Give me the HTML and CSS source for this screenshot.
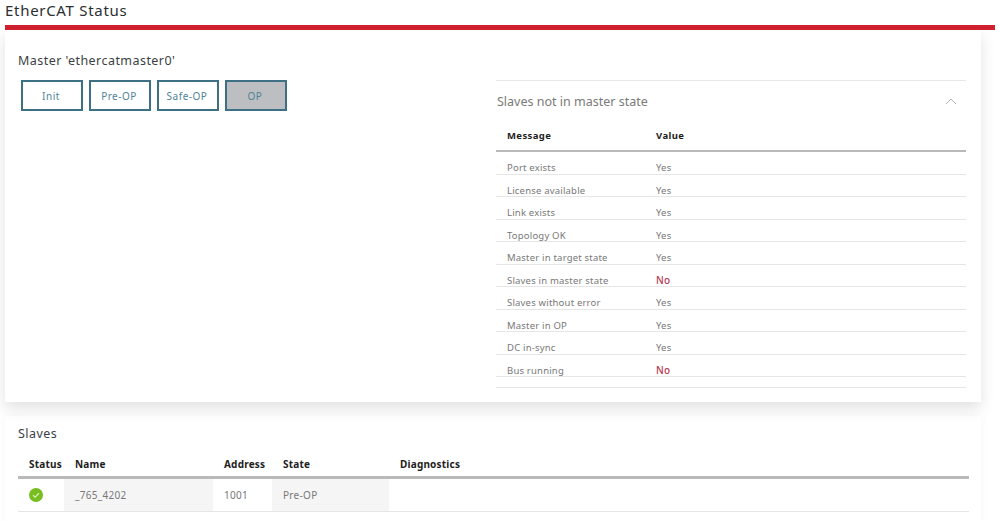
FILE: index.html
```html
<!DOCTYPE html>
<html lang="en">

<head>
    <meta charset="UTF-8">
    <meta name="viewport" content="width=device-width, initial-scale=1.0">
    <title>EtherCAT Status</title>
    <link rel="stylesheet" href="styles.css">
</head>

<body>
    <header class="pageTitle">
        <h1>EtherCAT Status</h1>
    </header>

    <section class="card masterCard">
        <div class="masterLeft">
            <h2>Master 'ethercatmaster0'</h2>
            <div class="stateButtons">
                <button>Init</button>
                <button>Pre-OP</button>
                <button>Safe-OP</button>
                <button class="active">OP</button>
            </div>
        </div>

        <div class="masterRight">
            <div class="accordionHead">
                <span>Slaves not in master state</span>
                <svg width="12" height="7" viewBox="0 0 12 7" aria-hidden="true">
                    <path d="M1 6 L6 1 L11 6" fill="none" stroke="#b5b5b5" stroke-width="1"/>
                </svg>
            </div>
            <div class="msgRow msgHead">
                <span>Message</span>
                <span>Value</span>
            </div>
            <div class="msgRow"><span>Port exists</span><span>Yes</span></div>
            <div class="msgRow"><span>License available</span><span>Yes</span></div>
            <div class="msgRow"><span>Link exists</span><span>Yes</span></div>
            <div class="msgRow"><span>Topology OK</span><span>Yes</span></div>
            <div class="msgRow"><span>Master in target state</span><span>Yes</span></div>
            <div class="msgRow"><span>Slaves in master state</span><span class="no">No</span></div>
            <div class="msgRow"><span>Slaves without error</span><span>Yes</span></div>
            <div class="msgRow"><span>Master in OP</span><span>Yes</span></div>
            <div class="msgRow"><span>DC in-sync</span><span>Yes</span></div>
            <div class="msgRow"><span>Bus running</span><span class="no">No</span></div>
            <div class="msgEnd"></div>
        </div>
    </section>

    <section class="slaves">
        <h2>Slaves</h2>
        <div class="slaveRow slaveHead">
            <span>Status</span>
            <span>Name</span>
            <span>Address</span>
            <span>State</span>
            <span>Diagnostics</span>
        </div>
        <div class="slaveRow">
            <span class="statusCell">
                <svg width="14" height="14" viewBox="0 0 14 14" aria-hidden="true">
                    <circle cx="7" cy="7" r="7" fill="#78be20"/>
                    <path d="M4 7.2 L6.2 9.2 L10 5.2" fill="none" stroke="#dff0c8" stroke-width="1.2"/>
                </svg>
            </span>
            <span class="shaded">_765_4202</span>
            <span>1001</span>
            <span class="shaded">Pre-OP</span>
            <span></span>
        </div>
    </section>
</body>

</html>
```

FILE: styles.css
```css
* {
    box-sizing: border-box;
    margin: 0;
    padding: 0;
}

body {
    background-color: #fff;
    font-family: "Noto Sans", "Liberation Sans", sans-serif;
    color: #525f6b;
    height: 521px;
    overflow: hidden;
}

.pageTitle {
    margin: 0 4px 0 5px;
    height: 30px;
    border-bottom: 5px solid #cf2030;
}

.pageTitle h1 {
    font-size: 15px;
    font-weight: 400;
    line-height: 20px;
    letter-spacing: 0.7px;
    color: #2b2f33;
}

.card {
    margin: 0 18px 0 5px;
    height: 372px;
    background-color: #fff;
    box-shadow: 0 6px 14px rgba(0, 0, 0, 0.12);
    clip-path: inset(0 -20px -30px -20px);
    display: flex;
}

.masterLeft {
    width: 491px;
    padding: 22px 0 0 13px;
}

h2 {
    font-size: 12.5px;
    font-weight: 400;
    line-height: 18px;
    letter-spacing: 0.45px;
    color: #3a3f44;
}

.stateButtons {
    display: flex;
    gap: 6px;
    margin: 10px 0 0 3px;
}

.stateButtons button {
    width: 62px;
    height: 31px;
    padding-right: 2px;
    background-color: #fff;
    border: 2px solid #3d7085;
    font-family: inherit;
    font-size: 10px;
    letter-spacing: 0.5px;
    color: #4f8497;
}

.stateButtons .active {
    background-color: #bcbec1;
}

.masterRight {
    width: 470px;
    margin-top: 50px;
    border-top: 1px solid #e8e8e8;
}

.accordionHead {
    height: 41px;
    padding: 0 9px 0 1px;
    display: flex;
    align-items: center;
    justify-content: space-between;
    font-size: 12.5px;
    color: #7a7a7a;
}

.msgRow {
    height: 22.5px;
    padding: 9px 0 0 11px;
    display: grid;
    grid-template-columns: 149px 1fr;
    border-bottom: 1px solid #e6e6e6;
    font-size: 9.5px;
    line-height: 13px;
    letter-spacing: 0.2px;
    color: #787878;
}

.msgHead {
    height: 30px;
    padding-top: 7px;
    border-bottom: 2px solid #b9b9b9;
    font-weight: 700;
    letter-spacing: 0.4px;
    color: #1d1d1d;
}

.no {
    font-weight: 500;
    font-size: 10px;
    color: #b83a55;
}

.msgEnd {
    height: 11px;
    border-bottom: 1px solid #e6e6e6;
}

.slaves {
    margin: 14px 18px 0 5px;
    padding: 9px 12px 0 13px;
    height: 110px;
    box-shadow: 0 0 10px rgba(0, 0, 0, 0.04);
}

.slaveRow {
    display: grid;
    grid-template-columns: 46px 149px 59px 117px 1fr;
    height: 33px;
    border-bottom: 1px solid #e6e6e6;
    font-size: 10px;
    letter-spacing: 0.3px;
    color: #787878;
}

.slaveRow span {
    padding-left: 11px;
    line-height: 32px;
}

.slaveHead {
    height: 23px;
    margin-top: 13px;
    border-bottom: 3px solid #b9b9b9;
    font-weight: 700;
    letter-spacing: 0.2px;
    color: #1d1d1d;
}

.slaveHead span {
    line-height: 16px;
}

.slaveRow .statusCell {
    padding-left: 11px;
    display: flex;
    align-items: center;
}

.shaded {
    background-color: #f5f5f5;
}
```
